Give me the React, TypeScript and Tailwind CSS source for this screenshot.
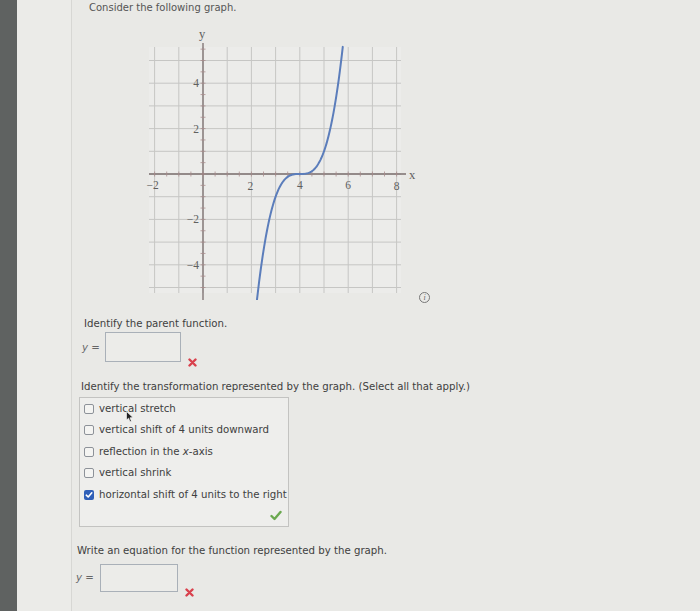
import React from 'react';

const X = (x: number) => 74 + 24.2 * x;
const Y = (y: number) => 146 - 22.7 * y;

function curvePath() {
  const pts: string[] = [];
  const x0 = 4 - Math.cbrt(5.55);
  const x1 = 4 + Math.cbrt(5.6);
  const n = 120;
  for (let i = 0; i <= n; i++) {
    const x = x0 + ((x1 - x0) * i) / n;
    const y = Math.pow(x - 4, 3);
    pts.push(`${i === 0 ? 'M' : 'L'}${X(x).toFixed(2)},${Y(y).toFixed(2)}`);
  }
  return pts.join(' ');
}

function Graph() {
  const vx = [-2, -1, 0, 1, 2, 3, 4, 5, 6, 7, 8];
  const hy = [5, 4, 3, 2, 1, 0, -1, -2, -3, -4, -5];
  const ticksX: number[] = [];
  for (let t = -2; t <= 8; t += 0.5) ticksX.push(t);
  const ticksY: number[] = [];
  for (let t = -5; t <= 5.5; t += 0.5) ticksY.push(t);
  const label = { fontFamily: '"Liberation Serif", "DejaVu Serif", serif', fontSize: 11.5, fill: '#606060' };
  return (
    <svg width="290" height="272" viewBox="0 0 290 272">
      <rect x="20" y="19" width="252" height="246" fill="#ececea" />
      {vx.map((v) => (
        <line key={`v${v}`} x1={X(v)} y1="19" x2={X(v)} y2="265" stroke="#c6c6c4" strokeWidth="1" />
      ))}
      {hy.map((h) => (
        <line key={`h${h}`} x1="20" y1={Y(h)} x2="272" y2={Y(h)} stroke="#c6c6c4" strokeWidth="1" />
      ))}
      <line x1="20" y1={Y(0)} x2="277" y2={Y(0)} stroke="#7b6f6f" strokeWidth="1.3" />
      <line x1={X(0)} y1="15" x2={X(0)} y2="272" stroke="#7b6f6f" strokeWidth="1.3" />
      {ticksX.map((t) => (
        <line key={`tx${t}`} x1={X(t)} y1={Y(0) - 2.5} x2={X(t)} y2={Y(0) + 2.5} stroke="#a88c8c" strokeWidth="0.8" />
      ))}
      {ticksY.map((t) => (
        <line key={`ty${t}`} x1={X(0) - 2.5} y1={Y(t)} x2={X(0) + 2.5} y2={Y(t)} stroke="#a88c8c" strokeWidth="0.8" />
      ))}
      <path d={curvePath()} fill="none" stroke="#5b7dbb" strokeWidth="2" strokeLinecap="round" />
      <text x={X(-2) - 2} y="161" textAnchor="middle" style={label}>−2</text>
      <text x={X(2) - 1} y="162" textAnchor="middle" style={label}>2</text>
      <text x={X(4)} y="161" textAnchor="middle" style={label}>4</text>
      <text x={X(6)} y="161" textAnchor="middle" style={label}>6</text>
      <text x={X(8)} y="162" textAnchor="middle" style={label}>8</text>
      <text x={X(0) - 4} y={Y(4) + 4} textAnchor="end" style={label}>4</text>
      <text x={X(0) - 4} y={Y(2) + 4} textAnchor="end" style={label}>2</text>
      <text x={X(0) - 4} y={Y(-2) + 4} textAnchor="end" style={label}>−2</text>
      <text x={X(0) - 4} y={Y(-4) + 4} textAnchor="end" style={label}>−4</text>
      <text x={X(0) - 1} y="10" textAnchor="middle" style={{ ...label, fontSize: 12.5 }}>y</text>
      <text x="283" y="151" textAnchor="middle" style={{ ...label, fontSize: 12.5 }}>x</text>
    </svg>
  );
}

function RedX() {
  return (
    <svg width="9" height="9" viewBox="0 0 9 9">
      <path d="M1.5 1.5 L7.5 7.5 M7.5 1.5 L1.5 7.5" stroke="#d9414d" strokeWidth="2.4" strokeLinecap="round" />
    </svg>
  );
}

function Checkbox({ checked }: { checked?: boolean }) {
  if (checked) {
    return (
      <span className="flex h-[10px] w-[10px] shrink-0 items-center justify-center rounded-[2px] bg-[#2f5fb8]">
        <svg width="8" height="8" viewBox="0 0 8 8">
          <path d="M1.3 4.2 L3.2 6 L6.8 1.8" fill="none" stroke="#ffffff" strokeWidth="1.6" strokeLinecap="round" strokeLinejoin="round" />
        </svg>
      </span>
    );
  }
  return <span className="h-[10px] w-[10px] shrink-0 rounded-[2px] border border-[#8d9299] bg-[#f4f4f2]" />;
}

const options = [
  { text: <>vertical stretch</>, checked: false },
  { text: <>vertical shift of 4 units downward</>, checked: false },
  { text: <>reflection in the <i>x</i>-axis</>, checked: false },
  { text: <>vertical shrink</>, checked: false },
  { text: <>horizontal shift of 4 units to the right</>, checked: true },
];

export default function App() {
  return (
    <div className="flex h-[611px] w-[700px] overflow-hidden bg-[#e9e9e6] font-['DejaVu_Sans',Verdana,sans-serif] text-[10.2px] text-[#404040]">
      <div className="w-[17px] shrink-0 bg-[#5f6261]" />
      <div className="w-[55px] shrink-0 border-r border-[#d7d7d4] bg-[#ebebe8]" />
      <main className="relative flex flex-1 flex-col">
        <p className="ml-[17px] pt-[2px] text-[10px] leading-[12px] text-[#555555]">Consider the following graph.</p>

        <div className="ml-[57px] mt-[14px] flex items-end">
          <Graph />
          <span className="mb-[-3px] flex h-[11px] w-[11px] items-center justify-center rounded-full border border-[#777777] font-['Liberation_Serif',serif] text-[8px] italic leading-none text-[#666666]">
            i
          </span>
        </div>

        <p className="ml-[12px] mt-[17px] leading-[14px]">Identify the parent function.</p>
        <div className="ml-[10px] mt-[1px] flex items-start">
          <span className="mt-[9px] leading-[14px] text-[#666666]"><i>y</i> =</span>
          <div className="ml-[5px] h-[30px] w-[76px] border border-[#a9b0b8] bg-[#ecece9]" />
          <span className="ml-[7px] mt-[26px]"><RedX /></span>
        </div>

        <p className="ml-[9px] mt-[13px] leading-[14px]">
          Identify the transformation represented by the graph. (Select all that apply.)
        </p>
        <div className="ml-[7px] mt-[3px] flex w-[210px] flex-col border border-[#c3c3c1] bg-[#eeeeec] pb-[5px]">
          {options.map((o, i) => (
            <div key={i} className="flex h-[21.5px] items-center gap-[5px] pl-[4px]">
              <Checkbox checked={o.checked} />
              <span className="whitespace-nowrap leading-[14px]">{o.text}</span>
            </div>
          ))}
          <div className="mt-[4px] flex justify-end pr-[6px]">
            <svg width="12" height="11" viewBox="0 0 12 11">
              <path d="M1.5 6 L4.5 9 L10.5 2" fill="none" stroke="#6aa84f" strokeWidth="2.4" strokeLinecap="round" strokeLinejoin="round" />
            </svg>
          </div>
        </div>

        <p className="ml-[5px] mt-[17px] leading-[14px]">Write an equation for the function represented by the graph.</p>
        <div className="ml-[4px] mt-[6px] flex items-start">
          <span className="mt-[7px] leading-[14px] text-[#666666]"><i>y</i> =</span>
          <div className="ml-[6px] h-[28px] w-[78px] border border-[#a9b0b8] bg-[#ecece9]" />
          <span className="ml-[7px] mt-[24px]"><RedX /></span>
        </div>

        <svg className="absolute left-[54px] top-[411px]" width="8" height="12" viewBox="0 0 8 12">
          <path d="M0.5 0.5 L0.5 9 L2.6 7.2 L4 10.8 L5.4 10.2 L4 6.8 L7 6.6 Z" fill="#222222" stroke="#ffffff" strokeWidth="0.6" />
        </svg>
      </main>
    </div>
  );
}
